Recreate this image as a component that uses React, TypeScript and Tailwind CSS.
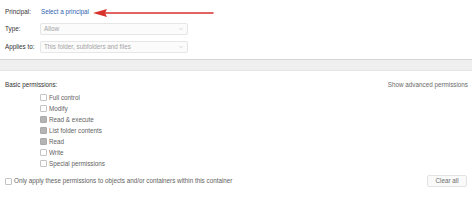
import { ChevronDown } from "lucide-react"

const perms = [
  { label: "Full control", checked: false },
  { label: "Modify", checked: false },
  { label: "Read & execute", checked: true },
  { label: "List folder contents", checked: true },
  { label: "Read", checked: true },
  { label: "Write", checked: false },
  { label: "Special permissions", checked: false },
]

function Box({ checked }: { checked?: boolean }) {
  return (
    <span
      className={
        checked
          ? "h-[7px] w-[7px] shrink-0 rounded-[1px] border border-[#a9a9a9] bg-[#b4b4b4]"
          : "h-[7px] w-[7px] shrink-0 rounded-[1px] border border-[#c4c4c4] bg-white"
      }
    />
  )
}

function Select({ value }: { value: string }) {
  return (
    <div className="flex h-[12px] w-[148px] items-center justify-between rounded-[2px] border border-[#e6e6e6] bg-[#fbfbfb] pl-[3px] pr-[3px] text-[#a3a3a3]">
      <span>{value}</span>
      <ChevronDown className="h-[6px] w-[6px] text-[#b8b8b8]" strokeWidth={2} />
    </div>
  )
}

export default function App() {
  return (
    <div className="h-[203px] w-[474px] overflow-hidden bg-white font-['Liberation_Sans',Arial,sans-serif] text-[6.3px] leading-none text-[#333]">
      {/* Principal / type / applies */}
      <div className="flex flex-col pl-[5px] pt-[6px]">
        <div className="flex h-[13px] items-center">
          <span className="w-[36px]">Principal:</span>
          <span className="text-[#2e62b0]">Select a principal</span>
          <svg className="ml-[4px]" width="122" height="10" viewBox="0 0 122 10">
            <line x1="12" y1="5" x2="120" y2="5" stroke="#d8322d" strokeWidth="1.6" strokeLinecap="round" />
            <polygon points="0,5 14,1 12,5 14,9" fill="#d8322d" />
          </svg>
        </div>
        <div className="mt-[4px] flex h-[12px] items-center">
          <span className="w-[35px]">Type:</span>
          <Select value="Allow" />
        </div>
        <div className="mt-[6px] flex h-[12px] items-center">
          <span className="w-[35px]">Applies to:</span>
          <Select value="This folder, subfolders and files" />
        </div>
      </div>

      {/* separator band */}
      <div className="mr-[2px] mt-[6px] h-[12px] border-t border-b border-t-[#d4d4d4] border-b-[#e4e4e4] bg-[#efefef]" />

      {/* basic permissions */}
      <div className="flex items-center justify-between pl-[5px] pr-[6px] pt-[11px]">
        <span>Basic permissions:</span>
        <span className="text-[#6b6b6b]">Show advanced permissions</span>
      </div>
      <div className="flex flex-col pl-[40px] pt-[4px]">
        {perms.map((p) => (
          <div key={p.label} className="flex h-[11px] items-center gap-[2px] text-[#626262]">
            <Box checked={p.checked} />
            <span>{p.label}</span>
          </div>
        ))}
      </div>

      <div className="flex items-center justify-between pl-[5px] pr-[7px] pt-[6px]">
        <div className="flex items-center gap-[2px] text-[#626262]">
          <Box />
          <span>Only apply these permissions to objects and/or containers within this container</span>
        </div>
        <button className="flex h-[12px] w-[40px] items-center justify-center rounded-[2px] border border-[#e3e3e3] bg-[#fafafa] text-[#6b6b6b]">
          Clear all
        </button>
      </div>
    </div>
  )
}
